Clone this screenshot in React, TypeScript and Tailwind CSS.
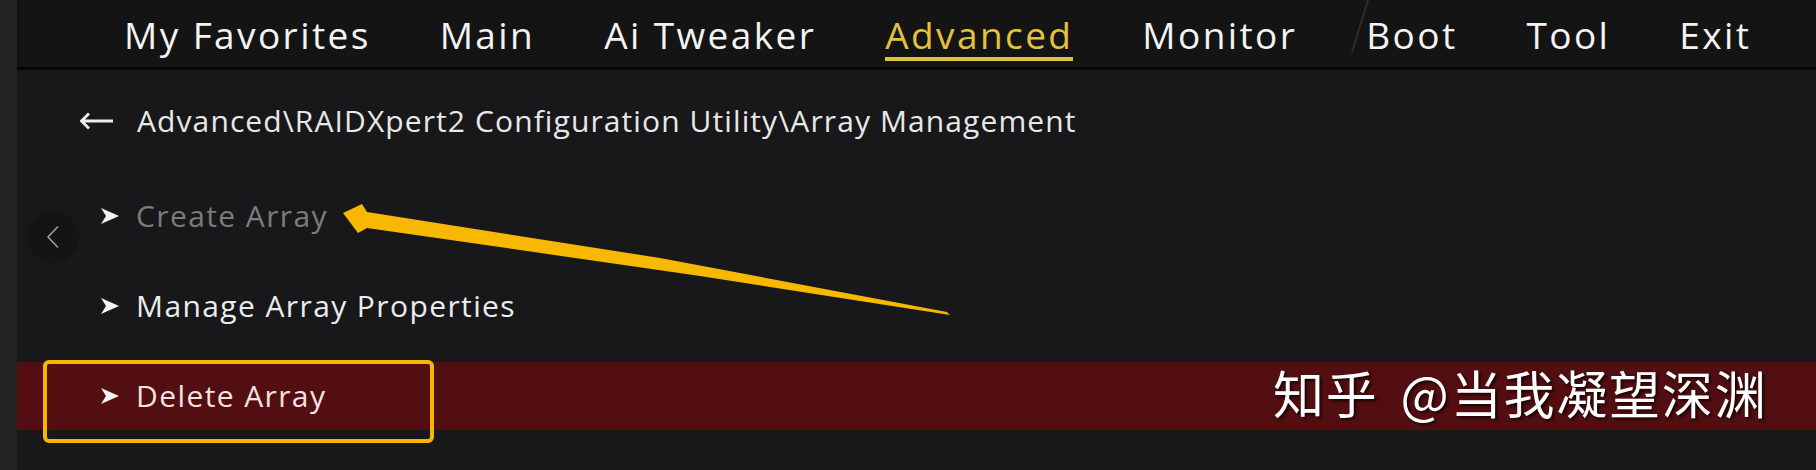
const tabs = ["My Favorites", "Main", "Ai Tweaker", "Advanced", "Monitor", "Boot", "Tool", "Exit"];

const items = [
  { label: "Create Array", text: "text-[#7c7c7c]", row: "" },
  { label: "Manage Array Properties", text: "text-[#ececec]", row: "" },
  { label: "Delete Array", text: "text-[#f6e2e2]", row: "bg-[#520e10]" },
];

function Chevron() {
  return (
    <svg width="18" height="16" viewBox="0 0 18 16" className="shrink-0">
      <polygon points="0,0 18,8 0,16 5,8" fill="#f4f4f4" />
    </svg>
  );
}

export default function App() {
  return (
    <div className="relative flex h-[470px] w-[1816px] overflow-hidden bg-[#18181a] font-['Open_Sans',sans-serif]">
      <div className="w-[17px] shrink-0 bg-[#232323]" />

      <div className="flex flex-1 flex-col">
        {/* top tab bar */}
        <div className="flex h-[70px] shrink-0 items-start gap-[69px] border-b-[3px] border-[#060606] bg-[#141414] pl-[107px] pt-[16px]">
          {tabs.map((tab) => (
            <div key={tab} className="flex flex-col">
              <span
                className={`text-[37px] leading-none tracking-[2.4px] ${
                  tab === "Advanced" ? "text-[#e5c23c]" : "text-[#f3f3f3]"
                }`}
              >
                {tab}
              </span>
              {tab === "Advanced" && <div className="mt-[4px] h-[4px] bg-[#e0bf45]" />}
            </div>
          ))}
        </div>

        {/* breadcrumb */}
        <div className="mt-[6px] flex h-[90px] items-center gap-[23px] pl-[63px]">
          <svg width="34" height="18" viewBox="0 0 34 18" className="shrink-0">
            <path d="M33 9H2M9 1.5L1.5 9L9 16.5" fill="none" stroke="#efefef" strokeWidth="2.8" />
          </svg>
          <span className="text-[30px] leading-none tracking-[1.1px] text-[#e8e8e8]">
            Advanced\RAIDXpert2 Configuration Utility\Array Management
          </span>
        </div>

        {/* menu items */}
        <div className="mt-[5px] flex flex-col">
          {items.map((item) => (
            <div key={item.label} className="flex h-[90px] items-center">
              <div className={`flex h-[68px] w-full items-center gap-[17px] pl-[84px] ${item.row}`}>
                <Chevron />
                <span className={`text-[30px] leading-none tracking-[1.4px] ${item.text}`}>{item.label}</span>
              </div>
            </div>
          ))}
        </div>
      </div>

      {/* side back button */}
      <div className="absolute left-[27px] top-[211px] flex h-[52px] w-[52px] items-center justify-center rounded-full bg-[#141416]">
        <svg width="14" height="24" viewBox="0 0 14 24">
          <path d="M12 1.5L2 12L12 22.5" fill="none" stroke="#9c9c9c" strokeWidth="1.6" />
        </svg>
      </div>

      {/* annotation: arrow + highlight box */}
      <svg className="pointer-events-none absolute left-0 top-0" width="1816" height="470" viewBox="0 0 1816 470">
        <line x1="1352" y1="52" x2="1368" y2="0" stroke="#2c2c2c" strokeWidth="2" />
        <polygon
          points="343,213 362,204 367,212 660,258 947,312 950,315 700,276 367,228 358,233"
          fill="#f6b800"
        />
      </svg>
      <div className="absolute left-[43px] top-[360px] h-[83px] w-[391px] rounded-[6px] border-[4px] border-[#f5b800]" />

      {/* watermark */}
      <div className="absolute left-[1273px] top-[367px] flex whitespace-pre font-['Noto_Sans_CJK_SC',sans-serif] text-[51px] font-normal leading-none tracking-[1.8px] text-white [text-shadow:2px_2px_3px_rgba(0,0,0,0.7)]">
        <span>知乎</span>
        <span className="ml-[22px]">@当我凝望深渊</span>
      </div>
    </div>
  );
}
